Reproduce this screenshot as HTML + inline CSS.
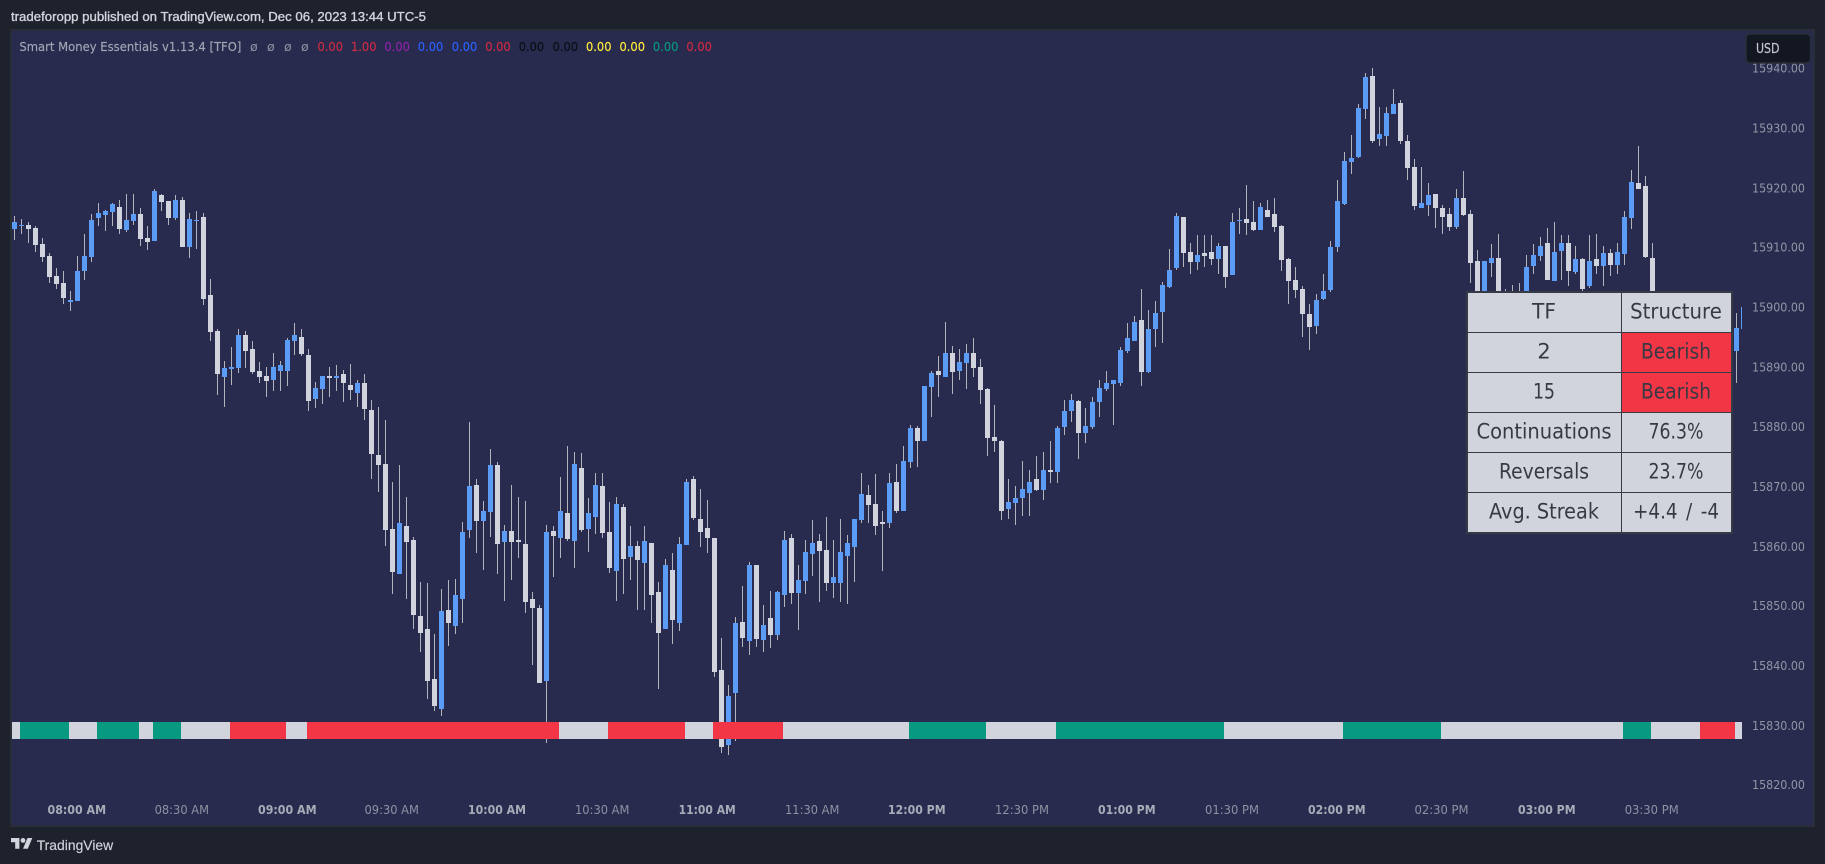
<!DOCTYPE html>
<html lang="en">
<head>
<meta charset="utf-8">
<title>Smart Money Essentials</title>
<style>
html,body{margin:0;padding:0;background:#1e222d;width:1825px;height:864px;overflow:hidden}
svg{display:block}
.w{stroke:#b2b5be;stroke-width:3;fill:none}
.u{stroke:#5b9cf6;stroke-width:15;fill:none}
.d{stroke:#d1d4dc;stroke-width:15;fill:none}
text{font-family:"DejaVu Sans","Liberation Sans",sans-serif}
.p{font-size:12.8px;fill:#9295a4}
.t{font-size:12.8px;fill:#8f92a2}
.b{font-size:12.8px;font-weight:700;fill:#a9acb8}
.l{font-size:12.6px;stroke-width:.15}
.c{font-size:21px;fill:#363a45;text-anchor:middle}
</style>
</head>
<body>
<svg xmlns="http://www.w3.org/2000/svg" width="1825" height="864" viewBox="0 0 1825 864">
<rect width="1825" height="864" fill="#1e222d"/>
<rect x="10" y="29" width="1805" height="798" fill="#2a2e39"/>
<rect x="12" y="31" width="1801" height="794" fill="#282a4e"/>

<g shape-rendering="crispEdges">
<!-- segment 1 -->
<g transform="translate(0,180) scale(.33333333)">
<path class="w" d="M43.5 108V180M64.5 117V162M85.5 126V189M106.5 138V216M127.5 174V246M148.5 219V309M169.5 264V327M190.5 273V372M211.5 333V393M232.5 228V363M253.5 162V300M274.5 102V246M295.5 69V138M316.5 90V153M337.5 69V138M358.5 60V162M379.5 42V156M400.5 42V135M421.5 84V198M442.5 138V210M463.5 27V183M484.5 42V93M505.5 63V135M526.5 45V120M547.5 51V201M568.5 99V234M589.5 93V207M610.5 99V375M631.5 297V483M652.5 447V645M673.5 543V681M694.5 501V615M715.5 447V579M736.5 453V564M757.5 483V582M778.5 546V609M799.5 561V651M820.5 519V633M841.5 543V633M862.5 474V618M883.5 429V525M904.5 447V528M925.5 507V693M946.5 606V684M967.5 588V672M988.5 561V651M1009.5 555V633M1030.5 570V666M1051.5 552V660M1072.5 600V681M1093.5 582V720"/>
<path class="u" d="M43.5 126V147M64.5 135V138M211.5 360V366M232.5 273V363M253.5 228V273M274.5 120V231M295.5 99V114M316.5 93V105M337.5 72V96M379.5 120V150M400.5 102V123M463.5 33V183M526.5 60V114M568.5 117V201M589.5 120V123M673.5 564V591M694.5 561V567M715.5 465V564M820.5 561V600M841.5 555V573M862.5 480V573M883.5 465V483M946.5 624V657M967.5 588V627M1009.5 588V594M1072.5 609V639"/>
<path class="d" d="M85.5 135V147M106.5 144V195M127.5 192V231M148.5 228V291M169.5 288V312M190.5 309V354M358.5 81V147M421.5 102V177M442.5 174V186M484.5 45V66M505.5 63V114M547.5 60V201M610.5 111V357M631.5 345V456M652.5 453V582M736.5 465V513M757.5 507V576M778.5 573V591M799.5 588V603M904.5 471V522M925.5 525V663M988.5 588V594M1030.5 582V609M1051.5 615V630M1093.5 609V687"/>
</g>
<!-- segment 2 -->
<g transform="translate(280,400) scale(.33333333)">
<path class="w" d="M274.5 0V237M295.5 21V276M316.5 60V438M337.5 246V582M358.5 195V522M379.5 291V597M400.5 411V687M421.5 546V756M442.5 549V897M463.5 702V933M484.5 567V948M505.5 540V738M526.5 537V702M547.5 366V669M568.5 66V414M589.5 237V459M610.5 303V510M631.5 147V411M652.5 186V522M673.5 375V603M694.5 255V540M715.5 291V474M736.5 303V639M757.5 576V795M778.5 615V849M799.5 375V1029M820.5 378V531M841.5 231V474M862.5 138V423M883.5 156V504M904.5 159V396M925.5 294V456M946.5 219V402M967.5 219V414M988.5 306V519M1009.5 291V603M1030.5 312V582M1051.5 378V540M1072.5 423V630M1093.5 378V630M1114.5 429V669M1135.5 546V867M1156.5 477V687M1177.5 459V732M1198.5 411V693M1219.5 237V435M1240.5 228V360M1261.5 267V441M1282.5 300V459M1303.5 414V831M1324.5 714V1059M1345.5 855V1065M1366.5 651V1023M1387.5 558V741M1408.5 486V765M1429.5 495V741"/>
<path class="u" d="M358.5 369V522M484.5 633V927M526.5 585V678M547.5 396V597M568.5 258V390M610.5 333V363M631.5 195V336M673.5 393V426M799.5 396V843M841.5 333V414M883.5 192V423M925.5 339V387M946.5 255V351M1009.5 312V513M1051.5 438V471M1093.5 423V489M1156.5 495V687M1198.5 432V669M1219.5 246V435M1345.5 888V1035M1366.5 669V879M1408.5 495V723"/>
<path class="d" d="M274.5 30V162M295.5 165V195M316.5 192V390M337.5 387V516M379.5 378V426M400.5 420V645M421.5 648V699M442.5 687V843M463.5 837V918M505.5 630V669M589.5 255V363M652.5 195V432M694.5 393V426M715.5 420V426M736.5 432V606M757.5 597V624M778.5 624V849M820.5 393V408M862.5 339V417M904.5 204V390M967.5 258V399M988.5 396V504M1030.5 321V477M1072.5 438V480M1114.5 429V585M1135.5 576V699M1177.5 510V660M1240.5 237V354M1261.5 357V396M1282.5 384V414M1303.5 414V816M1324.5 810V1041M1387.5 666V714M1429.5 495V717"/>
</g>
<!-- segment 3 -->
<g transform="translate(600,300) scale(.33333333)">
<path class="w" d="M490.5 915V1056M511.5 873V1044M532.5 873V1020M553.5 693V921M574.5 702V912M595.5 795V990M616.5 720V882M637.5 660V828M658.5 702V906M679.5 651V873M700.5 720V894M721.5 657V906M742.5 705V912M763.5 657V846M784.5 519V669M805.5 555V669M826.5 522V705M847.5 633V813M868.5 519V684M889.5 492V639M910.5 438V633M931.5 375V504M952.5 378V501M973.5 258V423M994.5 213V351M1015.5 168V291M1036.5 66V231M1057.5 138V282M1078.5 147V240M1099.5 132V267M1120.5 114V231M1141.5 177V312M1162.5 264V468M1183.5 315V456M1204.5 420V660M1225.5 537V657M1246.5 558V675M1267.5 483V648M1288.5 510V648M1309.5 468V573M1330.5 456V600M1351.5 423V549M1372.5 378V549M1393.5 300V405M1414.5 282V366M1435.5 300V477M1456.5 324V429M1477.5 291V387"/>
<path class="u" d="M490.5 975V1020M532.5 876V1005M553.5 720V885M595.5 840V879M616.5 756V843M637.5 729V762M700.5 831V849M721.5 756V849M742.5 729V768M763.5 657V741M784.5 582V660M868.5 549V669M910.5 483V633M931.5 384V486M973.5 258V423M994.5 219V261M1036.5 159V231M1078.5 186V213M1099.5 159V189M1225.5 606V627M1246.5 594V609M1267.5 567V594M1288.5 546V579M1330.5 510V570M1372.5 384V516M1393.5 333V381M1414.5 300V333M1456.5 378V399M1477.5 306V381"/>
<path class="d" d="M511.5 954V1005M574.5 714V879M658.5 723V753M679.5 750V849M805.5 585V615M826.5 612V678M847.5 666V672M889.5 546V633M952.5 384V423M1015.5 213V225M1057.5 159V216M1120.5 159V204M1141.5 201V270M1162.5 267V414M1183.5 411V423M1204.5 423V633M1309.5 537V570M1351.5 510V516M1435.5 303V399"/>
</g>
<!-- segment 4 -->
<g transform="translate(1000,150) scale(.33333333)">
<path class="w" d="M298.5 690V801M319.5 663V723M340.5 690V825M361.5 591V708M382.5 519V609M403.5 498V573M424.5 417V708M445.5 480V669M466.5 453V591M487.5 396V579M508.5 297V414M529.5 189V360M550.5 201V351M571.5 279V372M592.5 255V360M613.5 255V351M634.5 255V345M655.5 279V372M676.5 288V414M697.5 189V375M718.5 174V252M739.5 105V255M760.5 153V243M781.5 159V240M802.5 150V201M823.5 144V246M844.5 225V363M865.5 324V462M886.5 351V444M907.5 408V561M928.5 462V600M949.5 432V552M970.5 372V450M991.5 273V426M1012.5 90V306M1033.5 6V165"/>
<path class="u" d="M298.5 714V756M319.5 699V717M340.5 690V702M361.5 600V699M382.5 564V603M403.5 516V573M445.5 537V666M466.5 489V537M487.5 405V486M508.5 360V411M529.5 198V354M592.5 315V336M655.5 288V327M697.5 216V375M718.5 210V213M781.5 171V240M949.5 450V528M970.5 423V447M991.5 291V420M1012.5 153V291M1033.5 33V162"/>
<path class="d" d="M424.5 510V666M550.5 201V309M571.5 306V336M613.5 309V318M634.5 306V327M676.5 288V381M739.5 207V219M760.5 216V240M802.5 180V201M823.5 192V231M844.5 228V330M865.5 327V393M886.5 390V420M907.5 417V492M928.5 492V531"/>
</g>
<!-- segment 5 -->
<g transform="translate(1260,60) scale(.33333333)">
<path class="w" d="M274.5 225V342M295.5 132V294M316.5 39V177M337.5 24V249M358.5 141V258M379.5 141V258M400.5 87V162M421.5 120V252M442.5 225V360M463.5 297V450M484.5 321V444M505.5 369V468"/>
<path class="u" d="M274.5 294V306M295.5 144V291M316.5 51V147M358.5 222V237M379.5 159V228M400.5 132V162M484.5 429V444M505.5 405V435"/>
<path class="d" d="M337.5 48V243M421.5 129V243M442.5 243V324M463.5 321V438"/>
</g>
<!-- segment 6 -->
<g transform="translate(1400,0) scale(.33333333)">
<path class="w" d="M106.5 582V684M127.5 615V702M148.5 624V693M169.5 567V687M190.5 513V648M211.5 630V849M232.5 750V900M274.5 732V831M295.5 702V900M316.5 867V900M337.5 855V900M358.5 849V900M379.5 765V900M400.5 732V822M421.5 711V783M442.5 684V840M463.5 666V843M484.5 705V840M505.5 705V858M526.5 738V822M547.5 774V873M568.5 705V864M589.5 702V822M610.5 738V858M631.5 747V828M652.5 729V822M673.5 633V795M694.5 510V687M715.5 438V567M736.5 528V774M757.5 729V900"/>
<path class="u" d="M169.5 594V681M253.5 783V900M274.5 774V789M379.5 801V900M400.5 765V798M421.5 738V768M463.5 756V843M484.5 729V753M526.5 777V816M568.5 783V858M610.5 759V798M652.5 756V795M673.5 651V762M694.5 546V654"/>
<path class="d" d="M106.5 582V624M127.5 624V651M148.5 642V681M190.5 594V645M211.5 642V789M232.5 783V900M295.5 774V900M442.5 729V840M505.5 729V813M547.5 777V867M589.5 777V798M631.5 759V795M715.5 549V567M736.5 558V771M757.5 774V900"/>
</g>
<rect x="1736" y="313" width="1" height="70" fill="#b2b5be"/>
<rect x="1734" y="328" width="5" height="23" fill="#5b9cf6"/>
<rect x="1741" y="307" width="1" height="22" fill="#5b9cf6"/>

<!-- ribbon -->
<rect x="12" y="722" width="1730" height="17" fill="#d1d4dc"/>
<g fill="#089981">
<rect x="20" y="722" width="49" height="17"/>
<rect x="97" y="722" width="42" height="17"/>
<rect x="153" y="722" width="28" height="17"/>
<rect x="909" y="722" width="77" height="17"/>
<rect x="1056" y="722" width="168" height="17"/>
<rect x="1343" y="722" width="98" height="17"/>
<rect x="1623" y="722" width="28" height="17"/>
</g>
<g fill="#f23645">
<rect x="230" y="722" width="56" height="17"/>
<rect x="307" y="722" width="252" height="17"/>
<rect x="608" y="722" width="77" height="17"/>
<rect x="713" y="722" width="70" height="17"/>
<rect x="1700" y="722" width="35" height="17"/>
</g>
</g>

<!-- header -->
<text x="11" y="21" font-size="13" textLength="415" lengthAdjust="spacingAndGlyphs" fill="#d1d4dc" style="font-family:'Liberation Sans',sans-serif;font-weight:400" stroke="#d1d4dc" stroke-width=".35">tradeforopp published on TradingView.com, Dec 06, 2023 13:44 UTC-5</text>

<!-- legend -->
<text class="l" x="19.4" y="51" textLength="222" lengthAdjust="spacingAndGlyphs" fill="#a3a6b3" stroke="#a3a6b3">Smart Money Essentials v1.13.4 [TFO]</text>
<g class="l" fill="#8f92a2">
<text x="250" y="51">ø</text><text x="267" y="51">ø</text><text x="284" y="51">ø</text><text x="301" y="51">ø</text>
</g>
<g class="l">
<text x="317.5" y="51" textLength="25.5" lengthAdjust="spacingAndGlyphs" fill="#d12a42" stroke="#d12a42">0.00</text>
<text x="351" y="51" textLength="25.5" lengthAdjust="spacingAndGlyphs" fill="#d12a42" stroke="#d12a42">1.00</text>
<text x="384.4" y="51" textLength="25.5" lengthAdjust="spacingAndGlyphs" fill="#8e24aa" stroke="#8e24aa">0.00</text>
<text x="417.8" y="51" textLength="25.5" lengthAdjust="spacingAndGlyphs" fill="#2962ff" stroke="#2962ff">0.00</text>
<text x="451.8" y="51" textLength="25.5" lengthAdjust="spacingAndGlyphs" fill="#2962ff" stroke="#2962ff">0.00</text>
<text x="485.2" y="51" textLength="25.5" lengthAdjust="spacingAndGlyphs" fill="#d12a42" stroke="#d12a42">0.00</text>
<text x="518.7" y="51" textLength="25.5" lengthAdjust="spacingAndGlyphs" fill="#0c0e14" stroke="#0c0e14">0.00</text>
<text x="552.6" y="51" textLength="25.5" lengthAdjust="spacingAndGlyphs" fill="#0c0e14" stroke="#0c0e14">0.00</text>
<text x="586" y="51" textLength="25.5" lengthAdjust="spacingAndGlyphs" fill="#ffeb3b" stroke="#ffeb3b">0.00</text>
<text x="619.5" y="51" textLength="25.5" lengthAdjust="spacingAndGlyphs" fill="#ffeb3b" stroke="#ffeb3b">0.00</text>
<text x="652.9" y="51" textLength="25.5" lengthAdjust="spacingAndGlyphs" fill="#089981" stroke="#089981">0.00</text>
<text x="686.4" y="51" textLength="25.5" lengthAdjust="spacingAndGlyphs" fill="#d12a42" stroke="#d12a42">0.00</text>
</g>

<!-- price axis -->
<g class="p">
<text x="1752" y="72.7" textLength="53" lengthAdjust="spacingAndGlyphs">15940.00</text>
<text x="1752" y="132.5" textLength="53" lengthAdjust="spacingAndGlyphs">15930.00</text>
<text x="1752" y="192.5" textLength="53" lengthAdjust="spacingAndGlyphs">15920.00</text>
<text x="1752" y="251.5" textLength="53" lengthAdjust="spacingAndGlyphs">15910.00</text>
<text x="1752" y="311.5" textLength="53" lengthAdjust="spacingAndGlyphs">15900.00</text>
<text x="1752" y="371.5" textLength="53" lengthAdjust="spacingAndGlyphs">15890.00</text>
<text x="1752" y="431" textLength="53" lengthAdjust="spacingAndGlyphs">15880.00</text>
<text x="1752" y="491" textLength="53" lengthAdjust="spacingAndGlyphs">15870.00</text>
<text x="1752" y="551" textLength="53" lengthAdjust="spacingAndGlyphs">15860.00</text>
<text x="1752" y="610" textLength="53" lengthAdjust="spacingAndGlyphs">15850.00</text>
<text x="1752" y="670" textLength="53" lengthAdjust="spacingAndGlyphs">15840.00</text>
<text x="1752" y="730" textLength="53" lengthAdjust="spacingAndGlyphs">15830.00</text>
<text x="1752" y="789" textLength="53" lengthAdjust="spacingAndGlyphs">15820.00</text>
</g>

<!-- USD -->
<rect x="1746" y="34" width="64.5" height="29" rx="4" fill="#131722" stroke="#2a2e39" stroke-width="1.5"/>
<text x="1756" y="53" font-size="13" textLength="23.5" lengthAdjust="spacingAndGlyphs" fill="#c2c5ce" stroke="#c2c5ce" stroke-width=".2">USD</text>

<!-- time axis -->
<g class="b">
<text x="47.5" y="814" textLength="58.6" lengthAdjust="spacingAndGlyphs">08:00 AM</text>
<text x="258" y="814" textLength="58.6" lengthAdjust="spacingAndGlyphs">09:00 AM</text>
<text x="468" y="814" textLength="58" lengthAdjust="spacingAndGlyphs">10:00 AM</text>
<text x="678.6" y="814" textLength="57.2" lengthAdjust="spacingAndGlyphs">11:00 AM</text>
<text x="888" y="814" textLength="57.6" lengthAdjust="spacingAndGlyphs">12:00 PM</text>
<text x="1098" y="814" textLength="57.6" lengthAdjust="spacingAndGlyphs">01:00 PM</text>
<text x="1308" y="814" textLength="57.6" lengthAdjust="spacingAndGlyphs">02:00 PM</text>
<text x="1518" y="814" textLength="57.6" lengthAdjust="spacingAndGlyphs">03:00 PM</text>
</g>
<g class="t">
<text x="154.6" y="814" textLength="54.4" lengthAdjust="spacingAndGlyphs">08:30 AM</text>
<text x="364.5" y="814" textLength="54.4" lengthAdjust="spacingAndGlyphs">09:30 AM</text>
<text x="575" y="814" textLength="54.4" lengthAdjust="spacingAndGlyphs">10:30 AM</text>
<text x="785" y="814" textLength="54.4" lengthAdjust="spacingAndGlyphs">11:30 AM</text>
<text x="995" y="814" textLength="54" lengthAdjust="spacingAndGlyphs">12:30 PM</text>
<text x="1205" y="814" textLength="54" lengthAdjust="spacingAndGlyphs">01:30 PM</text>
<text x="1414.5" y="814" textLength="54" lengthAdjust="spacingAndGlyphs">02:30 PM</text>
<text x="1624.7" y="814" textLength="54" lengthAdjust="spacingAndGlyphs">03:30 PM</text>
</g>

<!-- table -->
<g shape-rendering="crispEdges">
<rect x="1466" y="291" width="267" height="243" fill="#363a45"/>
<g fill="#d1d4dc">
<rect x="1468" y="293" width="153" height="39"/>
<rect x="1622" y="293" width="109" height="39"/>
<rect x="1468" y="333" width="153" height="39"/>
<rect x="1468" y="373" width="153" height="39"/>
<rect x="1468" y="413" width="153" height="39"/>
<rect x="1622" y="413" width="109" height="39"/>
<rect x="1468" y="453" width="153" height="39"/>
<rect x="1622" y="453" width="109" height="39"/>
<rect x="1468" y="493" width="153" height="39"/>
<rect x="1622" y="493" width="109" height="39"/>
</g>
<g fill="#f23645">
<rect x="1622" y="333" width="109" height="39"/>
<rect x="1622" y="373" width="109" height="39"/>
</g>
</g>
<g class="c">
<text x="1544" y="318.5" textLength="24" lengthAdjust="spacingAndGlyphs">TF</text>
<text x="1676" y="318.5" textLength="91.7" lengthAdjust="spacingAndGlyphs">Structure</text>
<text x="1544" y="358.5">2</text>
<text x="1676" y="358.5" textLength="70" lengthAdjust="spacingAndGlyphs">Bearish</text>
<text x="1544" y="398.5" textLength="22" lengthAdjust="spacingAndGlyphs">15</text>
<text x="1676" y="398.5" textLength="70" lengthAdjust="spacingAndGlyphs">Bearish</text>
<text x="1544" y="438.5" textLength="135" lengthAdjust="spacingAndGlyphs">Continuations</text>
<text x="1676" y="438.5" textLength="55" lengthAdjust="spacingAndGlyphs">76.3%</text>
<text x="1544" y="478.5" textLength="90" lengthAdjust="spacingAndGlyphs">Reversals</text>
<text x="1676" y="478.5" textLength="55" lengthAdjust="spacingAndGlyphs">23.7%</text>
<text x="1544" y="518.5" textLength="110" lengthAdjust="spacingAndGlyphs">Avg. Streak</text>
<text x="1676" y="518.5" textLength="86" lengthAdjust="spacingAndGlyphs" style="word-spacing:3px">+4.4 / -4</text>
</g>

<!-- logo -->
<g transform="translate(11,835.6) scale(.6)" fill="#d1d4dc">
<path d="M14 22H7V11H0V4h14v18ZM28 22h-8l7.5-18h8L28 22Z"/>
<circle cx="20" cy="8" r="4"/>
</g>
<text x="36.7" y="850" font-size="14" textLength="76.5" lengthAdjust="spacingAndGlyphs" fill="#d1d4dc" style="font-family:'Liberation Sans',sans-serif" stroke="#d1d4dc" stroke-width=".15">TradingView</text>
</svg>
</body>
</html>
